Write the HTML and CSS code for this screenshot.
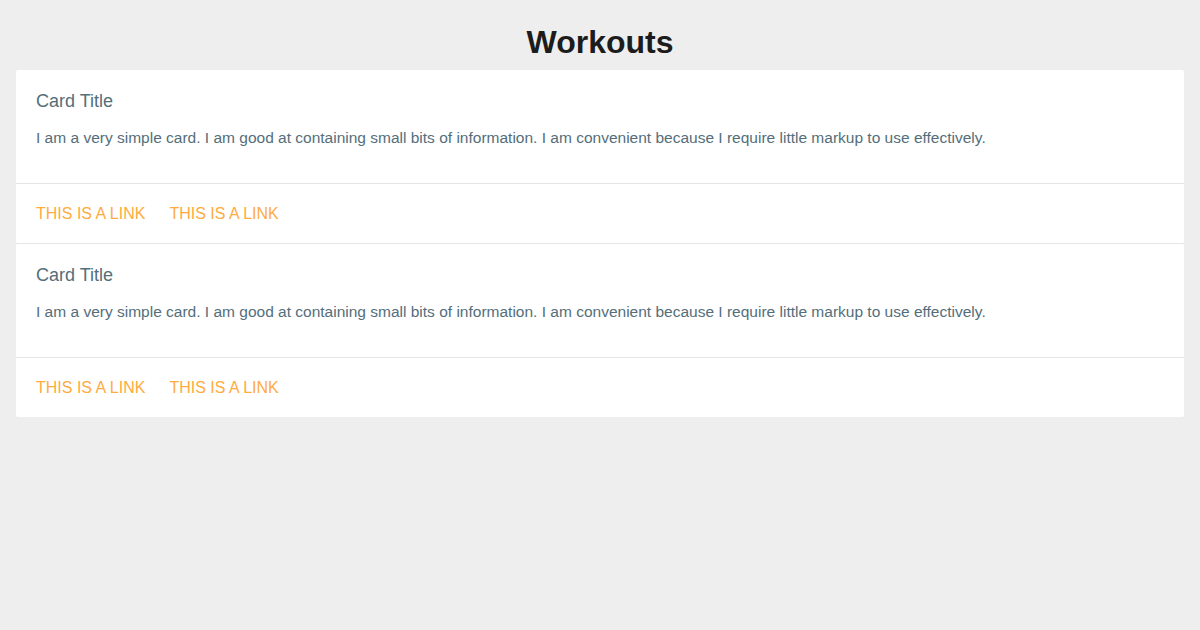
FILE: index.html
```html
<!DOCTYPE html>
<html lang="en">
<head>
    <meta charset="UTF-8">
    <meta name="viewport" content="width=device-width, initial-scale=1.0">
    <title>Workouts</title>
    <link rel="stylesheet" href="styles.css">
</head>
<body>
    <div id="app">
        <h1 class="page-title">Workouts</h1>
        <div class="card-list">
            <div class="card">
                <div class="card-content">
                    <div class="card-title">Card Title</div>
                    <p>I am a very simple card. I am good at containing small bits of information. I am convenient because I require little markup to use effectively.</p>
                </div>
                <div class="card-action">
                    <a href="#">This is a link</a>
                    <a href="#">This is a link</a>
                </div>
            </div>
            <div class="card">
                <div class="card-content">
                    <div class="card-title">Card Title</div>
                    <p>I am a very simple card. I am good at containing small bits of information. I am convenient because I require little markup to use effectively.</p>
                </div>
                <div class="card-action">
                    <a href="#">This is a link</a>
                    <a href="#">This is a link</a>
                </div>
            </div>
        </div>
    </div>
</body>
</html>
```

FILE: styles.css
```css
/* 기본 */
body {
    font-family: "Liberation Sans", Arial, sans-serif;
    margin: 0;
    padding: 0;
    background: #eeeeee;
}

#app {
    padding: 22px 16px 0;
}

.page-title {
    margin: 0 0 8px;
    font-size: 32px;
    line-height: 40px;
    text-align: center;
    color: #1c1c1c;
}

/* 카드 */
.card-list {
    display: flex;
    flex-direction: column;
}

.card {
    background: #fff;
    border-radius: 2px;
}

.card + .card {
    border-top: 1px solid #e6e6e6;
}

.card-content {
    padding: 20px;
    color: #546e7a;
}

.card-title {
    font-size: 18px;
    line-height: 22px;
    margin-bottom: 14px;
}

.card-content p {
    margin: 0 0 13px;
    font-size: 15.5px;
    line-height: 24px;
}

.card-action {
    display: flex;
    gap: 24px;
    padding: 17px 20px;
    border-top: 1px solid #e6e6e6;
}

.card-action a {
    color: #ffab40;
    font-size: 16px;
    line-height: 25px;
    text-decoration: none;
    text-transform: uppercase;
}
```
